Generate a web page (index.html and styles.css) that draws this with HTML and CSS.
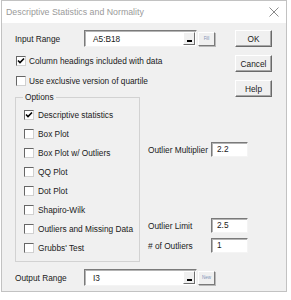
FILE: index.html
```html
<!DOCTYPE html>
<html>
	<head>
		<meta charset="utf-8">
		<title>Descriptive Statistics and Normality</title>
		<link rel="stylesheet" href="styles.css">
	</head>
	<body>
		<div class="window">
			<div class="titlebar">
				<span class="title">Descriptive Statistics and Normality</span>
				<svg class="close" width="10" height="10" viewBox="0 0 10 10">
					<path d="M0.5 0.5 L9.5 9.5 M9.5 0.5 L0.5 9.5" stroke="#8a8a8a" stroke-width="1" fill="none"/>
				</svg>
			</div>
			<div class="content">
				<div class="main">
					<div class="range-row">
						<span class="range-label">Input Range</span>
						<div class="range-box">
							<span class="range-value">A5:B18</span>
							<span class="picker"><i></i></span>
						</div>
						<button class="mini">Fill</button>
					</div>
					<label class="check first">
						<span class="box"><svg width="8" height="8" viewBox="0 0 8 8"><path d="M1 3.5 L3 5.5 L7 1.5" stroke="#000" stroke-width="1.6" fill="none"/></svg></span>
						Column headings included with data
					</label>
					<label class="check second">
						<span class="box"></span>
						Use exclusive version of quartile
					</label>

					<div class="options-row">
						<fieldset class="options">
							<legend>Options</legend>
							<label class="opt">
								<span class="box"><svg width="8" height="8" viewBox="0 0 8 8"><path d="M1 3.5 L3 5.5 L7 1.5" stroke="#000" stroke-width="1.6" fill="none"/></svg></span>
								Descriptive statistics
							</label>
							<label class="opt"><span class="box"></span>Box Plot</label>
							<label class="opt"><span class="box"></span>Box Plot w/ Outliers</label>
							<label class="opt"><span class="box"></span>QQ Plot</label>
							<label class="opt"><span class="box"></span>Dot Plot</label>
							<label class="opt"><span class="box"></span>Shapiro-Wilk</label>
							<label class="opt"><span class="box"></span>Outliers and Missing Data</label>
							<label class="opt"><span class="box"></span>Grubbs' Test</label>
						</fieldset>
						<div class="side">
							<div class="field multiplier">
								<span class="field-label">Outlier Multiplier</span>
								<span class="field-box">2.2</span>
							</div>
							<div class="field limit">
								<span class="field-label">Outlier Limit</span>
								<span class="field-box">2.5</span>
							</div>
							<div class="field count">
								<span class="field-label"># of Outliers</span>
								<span class="field-box">1</span>
							</div>
						</div>
					</div>

					<div class="range-row output">
						<span class="range-label">Output Range</span>
						<div class="range-box">
							<span class="range-value">I3</span>
							<span class="picker"><i></i></span>
						</div>
						<button class="mini">New</button>
					</div>
				</div>
				<div class="buttons">
					<button class="btn">OK</button>
					<button class="btn">Cancel</button>
					<button class="btn">Help</button>
				</div>
			</div>
		</div>
	</body>
</html>
```

FILE: styles.css
```css
* {
	margin: 0;
	padding: 0;
	box-sizing: border-box;
}

body {
	background-color: #fff;
	font-family: "Liberation Sans", Arial, sans-serif;
	font-size: 8.3px;
	color: #1a1a1a;
}

.window {
	margin-left: 1px;
	width: 286px;
	height: 292px;
	border: 1px solid #c2c2c2;
	background-color: #f0f0f0;
	display: flex;
	flex-direction: column;
}

.titlebar {
	height: 22px;
	background-color: #fff;
	display: flex;
	align-items: center;
	justify-content: space-between;
	padding: 0 7px 0 4px;
}

.title {
	font-size: 8.8px;
	color: #9a9a9a;
}

.content {
	flex: 1;
	display: flex;
}

.main {
	width: 233px;
	flex: none;
	padding: 7px 0 0 13px;
	display: flex;
	flex-direction: column;
}

/* range rows (input / output) */
.range-row {
	display: flex;
	align-items: center;
	height: 17px;
}

.range-label {
	width: 69px;
	flex: none;
}

.range-box {
	width: 113px;
	height: 17px;
	flex: none;
	display: flex;
	align-items: center;
	background-color: #fff;
	border: 1px solid;
	border-color: #7a7a7a #f4f4f4 #f4f4f4 #7a7a7a;
	box-shadow: inset 1px 1px 0 #b4b4b4;
}

.range-value {
	flex: 1;
	padding-left: 8px;
}

.picker {
	width: 12px;
	height: 13px;
	margin-right: 1px;
	background-color: #f0f0f0;
	border: 1px solid;
	border-color: #fff #6e6e6e #6e6e6e #fff;
	display: flex;
	align-items: flex-end;
	justify-content: center;
}

.picker i {
	display: block;
	width: 5px;
	height: 2px;
	margin-bottom: 2px;
	background-color: #000;
}

.mini {
	width: 17px;
	height: 14px;
	flex: none;
	margin-left: 1px;
	font-family: inherit;
	font-size: 4.5px;
	color: #7f94b8;
	background-color: #f0f0f0;
	border: 1px solid;
	border-color: #fff #7a7a7a #7a7a7a #fff;
	box-shadow: 1px 1px 0 #b8b8b8;
}

/* check boxes */
.check,
.opt {
	display: flex;
	align-items: center;
	gap: 3px;
}

.check {
	height: 14px;
	padding-left: 1px;
}

.check.first {
	margin-top: 7px;
}

.check.second {
	margin-top: 6px;
}

.box {
	width: 10px;
	height: 10px;
	flex: none;
	background-color: #fff;
	border: 1px solid;
	border-color: #666 #d0d0d0 #d0d0d0 #666;
	display: flex;
	align-items: center;
	justify-content: center;
}

/* options group */
.options-row {
	margin-top: 4px;
	display: flex;
	align-items: flex-start;
}

.options {
	width: 125px;
	flex: none;
	border: 1px solid #d2d2d2;
	padding: 3px 0 4px 8px;
}

.options legend {
	margin-left: -1px;
	padding: 0 2px;
	line-height: 10px;
}

.opt {
	height: 19px;
	gap: 4px;
	white-space: nowrap;
}

.side {
	margin-left: 8px;
	display: flex;
	flex-direction: column;
}

.field {
	display: flex;
	align-items: center;
	height: 15px;
}

.field.multiplier {
	margin-top: 50px;
}

.field.limit {
	margin-top: 61px;
}

.field.count {
	margin-top: 5px;
}

.field-label {
	width: 63px;
	flex: none;
	white-space: nowrap;
}

.field-box {
	width: 37px;
	height: 15px;
	flex: none;
	padding-left: 5px;
	line-height: 13px;
	background-color: #fff;
	border: 1px solid;
	border-color: #7a7a7a #f4f4f4 #f4f4f4 #7a7a7a;
	box-shadow: inset 1px 1px 0 #b4b4b4;
}

.output {
	margin-top: 7px;
}

/* dialog buttons */
.buttons {
	width: 37px;
	flex: none;
	padding-top: 7px;
	display: flex;
	flex-direction: column;
	gap: 8px;
}

.btn {
	height: 17px;
	font-family: inherit;
	font-size: 8.3px;
	color: #1a1a1a;
	background-color: #f0f0f0;
	border: 1px solid;
	border-color: #fff #6a6a6a #6a6a6a #fff;
	box-shadow: inset -1px -1px 0 #a8a8a8;
}
```
